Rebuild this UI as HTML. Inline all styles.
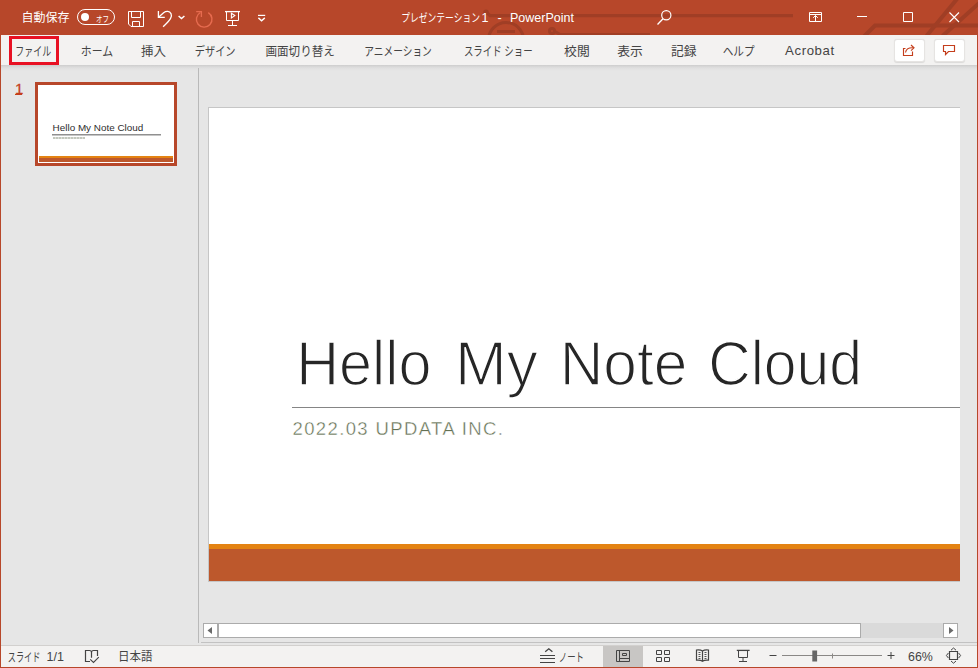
<!DOCTYPE html>
<html lang="ja"><head><meta charset="utf-8"><title>PowerPoint</title>
<style>
html,body{margin:0;padding:0}
body{width:978px;height:668px;overflow:hidden;position:relative;background:#E6E6E6;font-family:"Liberation Sans",sans-serif;color:#444444}
div,span,svg{position:absolute;box-sizing:border-box}
.h{color:transparent;white-space:nowrap;line-height:1;pointer-events:none}
.t{white-space:nowrap;line-height:1}
svg{overflow:visible}
</style></head><body>

<div id="titlebar" style="left:0;top:0;width:978px;height:35px;background:#B7472A"></div>
<svg style="left:0;top:0" width="978" height="35" viewBox="0 0 978 35"><g fill="none" stroke="#A03E25" stroke-width="3">
<path d="M487.5 13.2L490 15.7H793" stroke-width="3.2"/><circle cx="486" cy="12.2" r="1.6" stroke-width="2.4"/>
<circle cx="506" cy="40" r="17.5"/><path d="M497 31.5H515"/>
<circle cx="552" cy="31" r="2.5"/><path d="M555 31.5L560 34.5H650"/>
<g stroke-width="4"><path d="M862.5 38L875 25.5H978"/><path d="M957.8 -2L926.5 36"/><path d="M982 0.5L942.5 36"/></g>
</g></svg>
<svg style="left:0;top:0" width="978" height="35" viewBox="0 0 978 35">
<g font-family="&quot;Liberation Sans&quot;, &quot;Noto Sans CJK JP&quot;, sans-serif" fill="#fff">
<text x="21.5" y="22.4" font-size="12" textLength="48" lengthAdjust="spacingAndGlyphs">自動保存</text>
<text x="96" y="21.9" font-size="8.5" textLength="13" lengthAdjust="spacingAndGlyphs">オフ</text>
<text x="401.2" y="22.1" font-size="11.5" textLength="78.8" lengthAdjust="spacingAndGlyphs">プレゼンテーション</text>
</g>
</svg>
<span class="t" style="left:481.5px;top:12px;font-size:12.5px;color:#fff">1</span>
<span class="t" style="left:497.5px;top:12px;font-size:12.5px;color:#fff">-</span>
<span class="t" style="left:510px;top:12px;font-size:12.5px;color:#fff">PowerPoint</span>
<div style="left:77px;top:9px;width:38px;height:16px;border:1px solid #fff;border-radius:8px"></div>
<div style="left:81.2px;top:13.2px;width:7.9px;height:7.9px;border-radius:50%;background:#fff"></div>
<svg style="left:0;top:0" width="978" height="35" viewBox="0 0 978 35"><g fill="none" stroke="#fff" stroke-width="1">
<path d="M128.5 11.5H143.5V26.5H131L128.5 24Z"/><path d="M131.5 11.5V17.5H140.5V11.5"/><path d="M132.5 26.5V21.5H139.5V26.5"/>
<path d="M158.4 11V17.4H164.8" stroke-width="1.3"/><path d="M158.8 17.1L163.6 12.8C166.2 10.8 169.6 11 171 13.6C172.6 16.6 170.6 19.4 163.1 26.8" stroke-width="1.3"/>
<path d="M178.6 16L181.5 18.6L184.4 16" stroke-width="1.5"/>
<path d="M208.3 12.7A7.8 7.8 0 1 1 200.4 12.5" stroke="#E66B4F" stroke-width="1.4"/><path d="M196.2 11.6H201.4V17" stroke="#E66B4F" stroke-width="1.3"/>
<path d="M225 11.6H240" stroke-width="1.3"/><path d="M226.5 11.5V20.5H238.5V11.5"/><path d="M232.5 20.5V25.5"/><path d="M228 25.5H237"/><path d="M231.4 13.3L234.8 15.6L231.4 17.9Z" stroke-width="1.1"/>
<path d="M258 15.4H265.2" stroke-width="1.2"/><path d="M258.4 17.9L261.6 20.7L264.8 17.9" stroke-width="1.4"/>
<circle cx="666.3" cy="15.3" r="4.6" stroke-width="1.2"/><path d="M663 18.8L657.5 24.5" stroke-width="1.3"/>
<path d="M809.5 12.5H821.5V21.5H809.5Z"/><path d="M809.5 14.5H821.5"/><path d="M815.5 21V15.5"/><path d="M813.2 17.8L815.5 15.5L817.8 17.8"/>
<path d="M857 16.5H867"/><path d="M903.5 12.5H912.5V21.5H903.5Z"/><path d="M949.5 12.5L959 22M959 12.5L949.5 22" stroke-width="1.1"/>
</g></svg>
<div id="ribbon" style="left:1px;top:35px;width:976px;height:30px;background:#F3F2F1"></div>
<div style="left:1px;top:65px;width:976px;height:6px;background:linear-gradient(#CDCDCD,#DBDBDB 35%,#E2E2E2 65%,#E6E6E6)"></div>
<svg style="left:0;top:0" width="978" height="70" viewBox="0 0 978 70">
<g font-family="&quot;Liberation Sans&quot;, &quot;Noto Sans CJK JP&quot;, sans-serif" fill="#444444" font-size="12.5">
<text x="15.3" y="56" textLength="35.8" lengthAdjust="spacingAndGlyphs">ファイル</text>
<text x="80.8" y="56" textLength="32.3" lengthAdjust="spacingAndGlyphs">ホーム</text>
<text x="141.1" y="56" textLength="24.9" lengthAdjust="spacingAndGlyphs">挿入</text>
<text x="194.7" y="56" textLength="40.9" lengthAdjust="spacingAndGlyphs">デザイン</text>
<text x="265.5" y="56" textLength="69.3" lengthAdjust="spacingAndGlyphs">画面切り替え</text>
<text x="364.3" y="56" textLength="67.5" lengthAdjust="spacingAndGlyphs">アニメーション</text>
<text x="463.9" y="56" textLength="68.7" lengthAdjust="spacingAndGlyphs">スライド ショー</text>
<text x="564.1" y="56" textLength="25.6" lengthAdjust="spacingAndGlyphs">校閲</text>
<text x="617.3" y="56" textLength="25.6" lengthAdjust="spacingAndGlyphs">表示</text>
<text x="670.9" y="56" textLength="25.5" lengthAdjust="spacingAndGlyphs">記録</text>
<text x="722.7" y="56" textLength="31.9" lengthAdjust="spacingAndGlyphs">ヘルプ</text>
</g>
</svg>
<span class="t" style="left:785px;top:44px;font-size:13.2px;letter-spacing:0.62px;color:#444444">Acrobat</span>
<div style="left:9px;top:36px;width:50px;height:29px;border:3px solid #E81123"></div>
<div style="left:893.5px;top:38.5px;width:31px;height:23px;background:#fff;border:1px solid #E6E4E2;border-radius:3px;box-shadow:0 0.5px 1px rgba(0,0,0,.10)"></div>
<div style="left:933.5px;top:38.5px;width:31px;height:23px;background:#fff;border:1px solid #E6E4E2;border-radius:3px;box-shadow:0 0.5px 1px rgba(0,0,0,.10)"></div>
<svg style="left:0;top:0" width="978" height="70" viewBox="0 0 978 70"><g fill="none" stroke="#C43E1C" stroke-width="1.15">
<path d="M905.5 48.5H903.5V55.5H912.5V51.5"/><path d="M905.5 52.5C906 49 909 47.5 913.5 47.8"/><path d="M911 45L914 47.8L911 50.6"/>
<path d="M943.5 45.5H954.5V51.5H948.5L945.5 54.5V51.5H943.5Z"/>
</g></svg>
<div style="left:198px;top:68px;width:1px;height:575px;background:#B9B9B9"></div>
<span class="t" style="left:15px;top:81.4px;font-size:15px;color:#C43E1C;-webkit-text-stroke:0.3px #C43E1C">1</span><div style="left:15.4px;top:93.8px;width:6.6px;height:1px;background:#C43E1C"></div>
<div style="left:35px;top:82px;width:142px;height:84px;border:3px solid #B7472A;background:#fff"></div>
<div style="left:39px;top:156px;width:134px;height:2px;background:#E48312"></div>
<div style="left:39px;top:157.5px;width:134px;height:4.5px;background:#BD582C"></div>
<div style="left:52px;top:133.8px;width:109px;height:1px;background:#909090"></div><div style="left:52px;top:134.8px;width:109px;height:0.8px;background:#C6C6C6"></div>
<svg style="left:0;top:0" width="978" height="200" viewBox="0 0 978 200"><text x="52.6" y="130.8" font-family="&quot;Liberation Sans&quot;, sans-serif" font-size="9.4" fill="#2E2E2E" textLength="90.7" lengthAdjust="spacingAndGlyphs">Hello My Note Cloud</text></svg>
<div style="left:52.5px;top:137.2px;width:32.5px;height:1.8px;background:repeating-linear-gradient(90deg,#C3C7BE 0 2px,#DCDFD8 2px 3px)"></div>
<div id="slide" style="left:208px;top:107px;width:752px;height:475px;background:#fff;border:1px solid #C6C6C6;border-right:none"></div>
<div style="left:209px;top:544px;width:751px;height:5px;background:#E48312"></div>
<div style="left:209px;top:549px;width:751px;height:32px;background:#BD582C"></div>
<div style="left:292px;top:407px;width:668px;height:1px;background:#858585"></div>
<svg style="left:0;top:0" width="978" height="668" viewBox="0 0 978 668">
<g font-family="&quot;Liberation Sans&quot;, sans-serif" font-size="63" fill="#262626" stroke="#fff" stroke-width="1.5">
<text x="296.2" y="385.05" textLength="135.2" lengthAdjust="spacingAndGlyphs">Hello</text>
<text x="454.9" y="385.05" textLength="82.8" lengthAdjust="spacingAndGlyphs">My</text>
<text x="559.7" y="385.05" textLength="127.6" lengthAdjust="spacingAndGlyphs">Note</text>
<text x="708.2" y="385.05" textLength="153.8" lengthAdjust="spacingAndGlyphs">Cloud</text>
</g>
<text x="292.5" y="435.1" font-family="&quot;Liberation Sans&quot;, sans-serif" font-size="18.5" fill="#637052" stroke="#fff" stroke-width="0.4" textLength="210.3" lengthAdjust="spacing">2022.03 UPDATA INC.</text>
</svg>
<div style="left:201px;top:642px;width:776px;height:1px;background:#C2C2C2"></div>
<div style="left:218px;top:623px;width:725px;height:15px;background:#DADADA"></div>
<div style="left:203px;top:623px;width:15px;height:15px;background:#fff;border:1px solid #ABABAB"></div>
<div style="left:943px;top:623px;width:15px;height:15px;background:#fff;border:1px solid #ABABAB"></div>
<div style="left:218px;top:623px;width:643px;height:15px;background:#fff;border:1px solid #ABABAB"></div>
<svg style="left:0;top:0" width="978" height="668" viewBox="0 0 978 668"><path d="M212 627V634L207.5 630.5Z" fill="#6A6A6A"/><path d="M949 627V634L953.5 630.5Z" fill="#6A6A6A"/></svg>
<div id="status" style="left:1px;top:645px;width:976px;height:22px;background:#F3F2F1;border-top:1px solid #D2D0CE"></div>
<div style="left:603px;top:646px;width:40px;height:21px;background:#C8C6C4"></div>
<svg style="left:0;top:0" width="978" height="668" viewBox="0 0 978 668">
<g font-family="&quot;Liberation Sans&quot;, &quot;Noto Sans CJK JP&quot;, sans-serif" fill="#444444" font-size="12">
<text x="7.8" y="661.6" textLength="32.5" lengthAdjust="spacingAndGlyphs">スライド</text>
<text x="118" y="660.6" textLength="34.5" lengthAdjust="spacingAndGlyphs">日本語</text>
<text x="558.8" y="661.6" textLength="25.2" lengthAdjust="spacingAndGlyphs">ノート</text>
</g>
<g fill="none" stroke="#444444" stroke-width="1">
<path d="M90 661.5H85.5V650.5H89.5Q91.5 650.5 91.5 652.5V657.8M91.5 652.5Q91.5 650.5 93.5 650.5H97.5V656" stroke-width="1.2"/><path d="M90.2 659.3L93.5 662.5L98.8 657.2" stroke-width="1.1"/>
<path d="M545.2 651.8L548.8 648.8L552.4 651.8" stroke-width="1.3"/><path d="M540 655.5H555M540 658.5H555M540 662.5H555"/>
<path d="M616.5 650.5H629.5V661.5H616.5Z"/><path d="M619.5 650.5V661.5M619.5 658.5H629.5"/><path d="M622.5 653.5H626.5V655.5H622.5Z"/>
<path d="M656.5 650.5H661.5V654.5H656.5ZM664.5 650.5H669.5V654.5H664.5ZM656.5 657.5H661.5V661.5H656.5ZM664.5 657.5H669.5V661.5H664.5Z"/>
<path d="M702.5 651V661.5M702.5 651C701 649.9 698.5 649.8 696.5 650V660.2C698.5 660 701 660.2 702.5 661.3C704 660.2 706.5 660 708.5 660.2V650C706.5 649.8 704 649.9 702.5 651" stroke-width="1.2"/><path d="M698.5 652.5H700.5M698.5 654.5H700.5M698.5 656.5H700.5M698.5 658.5H700.5M704.5 652.5H706.5M704.5 654.5H706.5M704.5 656.5H706.5M704.5 658.5H706.5" stroke-width="0.9"/>
<path d="M736.8 650.4H749.6" stroke-width="1.3"/><path d="M738.5 650.5V657.5H747.5V650.5M743 657.5V661.5M739 661.5H747"/>
<path d="M769.5 655.5H776.5"/><path d="M782 655.5H882" stroke="#8A8886"/><path d="M832.5 653.5V658.5" stroke="#8A8886"/><path d="M887.5 655.5H894.5M891 652V659"/>
<path d="M949.5 651.5H957.5V659.5H949.5Z" stroke-width="1.2"/><path d="M951 650.2L953.5 648L956 650.2M951 661L953.5 663.2L956 661M948.4 653L946.4 655.5L948.4 658M958.6 653L960.6 655.5L958.6 658"/>
</g>
<rect x="812.3" y="650.5" width="4.8" height="11" fill="#666"/>
</svg>
<span class="t" style="left:46.5px;top:651px;font-size:12.5px;color:#444444">1/1</span>
<span class="t" style="left:908px;top:650.5px;font-size:12.4px;color:#444444">66%</span>
<div style="left:0;top:35px;width:1px;height:633px;background:#B7472A"></div>
<div style="left:977px;top:35px;width:1px;height:633px;background:#B7472A"></div>
<div style="left:0;top:667px;width:978px;height:1px;background:#B7472A"></div>
</body></html>
